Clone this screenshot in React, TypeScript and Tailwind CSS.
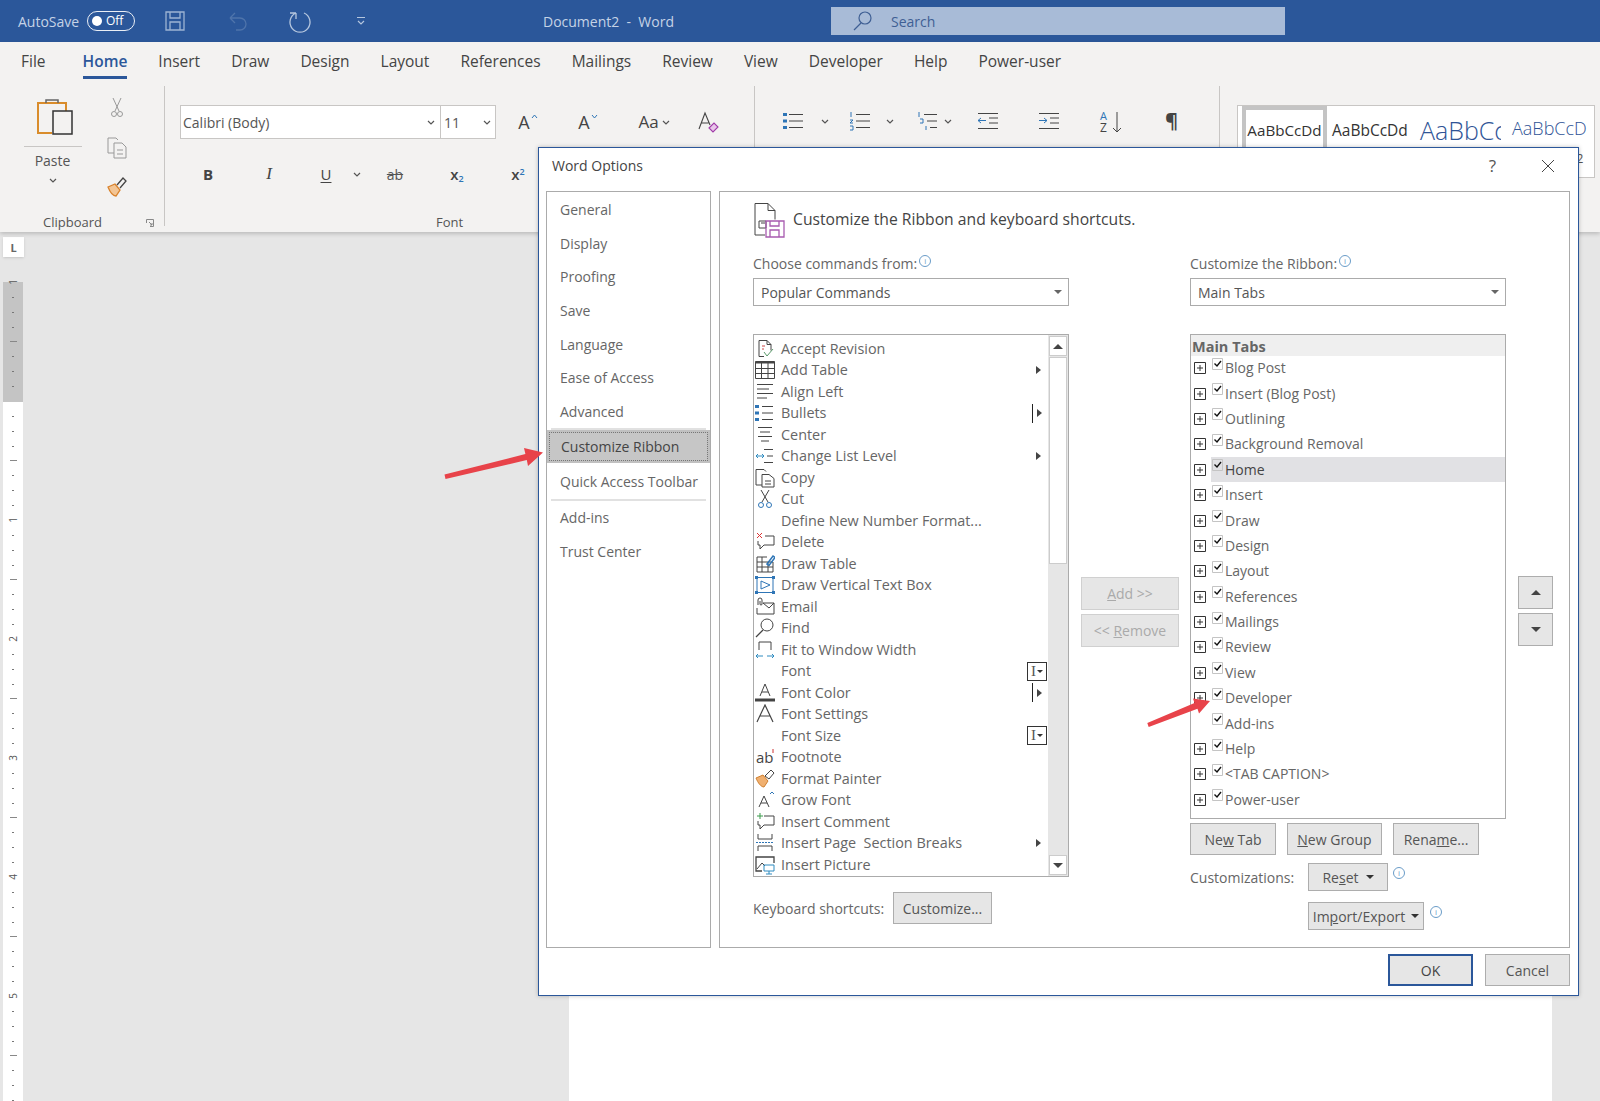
import type { ReactNode } from "react";

const FONT = "font-['Open_Sans','Noto_Sans',sans-serif]";

const TABS = ["File", "Home", "Insert", "Draw", "Design", "Layout", "References", "Mailings", "Review", "View", "Developer", "Help", "Power-user"];
const NAV_TOP = ["General", "Display", "Proofing", "Save", "Language", "Ease of Access", "Advanced"];
const TREE = ["Blog Post", "Insert (Blog Post)", "Outlining", "Background Removal", "Home", "Insert", "Draw", "Design", "Layout", "References", "Mailings", "Review", "View", "Developer", "Add-ins", "Help", "<TAB CAPTION>", "Power-user"];

function Svg({ w = 20, h = 20, children, className = "" }: { w?: number; h?: number; children: ReactNode; className?: string }) {
  return (
    <svg width={w} height={h} viewBox={`0 0 ${w} ${h}`} fill="none" stroke="#444" strokeWidth="1" className={`shrink-0 ${className}`}>
      {children}
    </svg>
  );
}

function Chevron({ color = "#555" }: { color?: string }) {
  return (
    <svg width="8" height="5" viewBox="0 0 8 5" fill="none" stroke={color} strokeWidth="1.2" className="shrink-0">
      <path d="M1 1l3 3 3-3" />
    </svg>
  );
}

const LIST_ICONS: Record<string, ReactNode> = {
  "Accept Revision": (
    <Svg>
      <path d="M4 1.5h8l4 4v6M4 1.5v16h5" />
      <path d="M12 1.5v4h4" />
      <path d="M9 13l3 4 6-7" stroke="#5a9a6a" />
      <path d="M7 7h3M7 10h2" stroke="#c44" />
    </Svg>
  ),
  "Add Table": (
    <Svg>
      <path d="M.5 1.5h19v17H.5z" />
      <path d="M.5 2.5h19" strokeWidth="2" />
      <path d="M.5 8.5h19M.5 13.5h19M6.5 3v15M13 3v15" />
    </Svg>
  ),
  "Align Left": (
    <Svg>
      <path d="M2 2.5h16M2 7h12M2 11.5h16M2 16h10" />
    </Svg>
  ),
  Bullets: (
    <Svg>
      <path d="M7 3.5h11M7 10h11M7 16.5h11" />
      <path d="M0 2h4v3H0zM0 8.5h4v3H0zM0 15h4v3H0z" fill="#2e75b6" stroke="none" />
    </Svg>
  ),
  Center: (
    <Svg>
      <path d="M3 2.5h14M5 7h10M3 11.5h14M6 16h8" />
    </Svg>
  ),
  "Change List Level": (
    <Svg>
      <path d="M9 3.5h9M12 10h6M9 16.5h9" />
      <path d="M1 10h8M3 8l-2 2 2 2M7 8l2 2-2 2" stroke="#2e8bc0" />
    </Svg>
  ),
  Copy: (
    <Svg>
      <path d="M7 17H1V1.5h8l2 2" />
      <path d="M7 6.5h7l5 4V19H7z" />
      <path d="M10 13h6M10 16h6" />
    </Svg>
  ),
  Cut: (
    <Svg>
      <path d="M6 1l7 12M14 1L7 13" />
      <circle cx="6" cy="16" r="2.5" stroke="#2e75b6" />
      <circle cx="14" cy="16" r="2.5" stroke="#2e75b6" />
    </Svg>
  ),
  Delete: (
    <Svg>
      <path d="M10 4h9v9H9l-4 4v-4H3V9" />
      <path d="M2 1l5 5M7 1L2 6" stroke="#d33" />
    </Svg>
  ),
  "Draw Table": (
    <Svg>
      <path d="M2 3h10M2 3v15h16V8M2 8h16M2 13h16M7 3v15M13 8v10" />
      <path d="M12 10l6-8 2 1.5-6 8z" stroke="#2e75b6" strokeWidth="1.5" />
    </Svg>
  ),
  "Draw Vertical Text Box": (
    <Svg>
      <path d="M2 2.5h16v15H2z" stroke="#2e75b6" />
      <path d="M6 6l9 4-9 4V6z" stroke="#2e75b6" />
      <path d="M0 1h3v3H0zM17 1h3v3h-3zM0 16h3v3H0zM17 16h3v3h-3z" fill="#2e75b6" stroke="none" />
    </Svg>
  ),
  Email: (
    <Svg>
      <path d="M8 6h11v11H2v-6" />
      <path d="M8 6l6 5 5-5" />
      <path d="M3 8V3a2 2 0 014 0v4a1 1 0 01-2 0V4" />
    </Svg>
  ),
  Find: (
    <Svg>
      <circle cx="12" cy="7" r="6" />
      <path d="M8 12l-7 7" strokeWidth="1.3" />
    </Svg>
  ),
  "Fit to Window Width": (
    <Svg>
      <path d="M4 10V2h12v8" />
      <path d="M1 16h7M3 14l-2 2 2 2M12 16h7M17 14l2 2-2 2" stroke="#2e8bc0" />
    </Svg>
  ),
  "Font Color": (
    <Svg>
      <path d="M5 13l5-12 5 12M7 9h6" />
      <path d="M0 15.5h20v3H0z" fill="#444" stroke="none" />
    </Svg>
  ),
  "Font Settings": (
    <Svg>
      <path d="M2 18L10 1l8 17M5 12h10" strokeWidth="1.2" />
    </Svg>
  ),
  Footnote: (
    <Svg>
      <text x="1" y="16" fontSize="15" fill="#444" stroke="none" fontFamily="Open Sans">ab</text>
      <path d="M18 2v4" stroke="#c33" />
    </Svg>
  ),
  "Format Painter": (
    <Svg>
      <path d="M1 9l7-3 5 6-4 6c-3 0-6-4-8-9z" fill="#f0b070" stroke="#d08030" />
      <path d="M10 7l6-6 3 3-5 6z" />
    </Svg>
  ),
  "Grow Font": (
    <Svg>
      <path d="M4 17l5-11 5 11M6 13h6" />
      <path d="M15 4l2-2 2 2" stroke="#2e75b6" />
    </Svg>
  ),
  "Insert Comment": (
    <Svg>
      <path d="M9 4h10v9H9l-4 4v-4H3V9" />
      <path d="M2 4h6M5 1v6" stroke="#3a9a4a" />
    </Svg>
  ),
  "Insert Page  Section Breaks": (
    <Svg>
      <path d="M3 1v5h14V1M3 18v-5h14v5" />
      <path d="M1 9.5h18" strokeDasharray="2 1" stroke="#2e75b6" />
    </Svg>
  ),
  "Insert Picture": (
    <Svg>
      <path d="M7 16H1V2h18v6" strokeWidth="1.3" />
      <path d="M2 14l5-6 3 3" />
      <path d="M9 10h10v6H9zM14 16v3M11 19h6" stroke="#2e8bc0" />
    </Svg>
  ),
};

const COMMANDS: { label: string; side?: "tri" | "bar" | "box" }[] = [
  { label: "Accept Revision" },
  { label: "Add Table", side: "tri" },
  { label: "Align Left" },
  { label: "Bullets", side: "bar" },
  { label: "Center" },
  { label: "Change List Level", side: "tri" },
  { label: "Copy" },
  { label: "Cut" },
  { label: "Define New Number Format..." },
  { label: "Delete" },
  { label: "Draw Table" },
  { label: "Draw Vertical Text Box" },
  { label: "Email" },
  { label: "Find" },
  { label: "Fit to Window Width" },
  { label: "Font", side: "box" },
  { label: "Font Color", side: "bar" },
  { label: "Font Settings" },
  { label: "Font Size", side: "box" },
  { label: "Footnote" },
  { label: "Format Painter" },
  { label: "Grow Font" },
  { label: "Insert Comment" },
  { label: "Insert Page  Section Breaks", side: "tri" },
  { label: "Insert Picture" },
];

function SideMark({ side }: { side?: "tri" | "bar" | "box" }) {
  if (side === "tri") return <div className="ml-auto mr-[6px] h-0 w-0 border-y-[4px] border-l-[5px] border-y-transparent border-l-[#444]" />;
  if (side === "bar")
    return (
      <div className="ml-auto mr-[5px] flex items-center gap-[4px]">
        <div className="h-[19px] w-px bg-[#222]" />
        <div className="h-0 w-0 border-y-[4px] border-l-[5px] border-y-transparent border-l-[#444]" />
      </div>
    );
  if (side === "box")
    return (
      <div className="ml-auto flex h-[19px] w-[20px] items-center justify-center gap-px border border-[#333] bg-white font-['Liberation_Serif',serif] text-[15px] leading-none text-[#555]">
        I<div className="h-0 w-0 border-x-[3px] border-t-[3px] border-x-transparent border-t-[#333]" />
      </div>
    );
  return null;
}

function Info() {
  return (
    <div className="flex h-[12px] w-[12px] shrink-0 items-center justify-center rounded-full border border-[#6a9cc8] text-[8px] leading-none text-[#6a9cc8]">i</div>
  );
}

const BTN_TONES = {
  normal: "border border-[#adadad] text-[#555]",
  disabled: "border border-[#d0d0d0] text-[#aaa]",
  primary: "border-2 border-[#2b579a] text-[#444]",
};

function Btn({ className = "", tone = "normal", children }: { className?: string; tone?: keyof typeof BTN_TONES; children: ReactNode }) {
  return (
    <div className={`flex items-center justify-center bg-[#e6e6e6] text-[14px] ${BTN_TONES[tone]} ${className}`}>
      {children}
    </div>
  );
}

function Select({ text }: { text: string }) {
  return (
    <div className="flex h-[28px] items-center border border-[#ababab] bg-white pl-[7px] pr-[6px] text-[14px] text-[#555]">
      {text}
      <div className="ml-auto h-0 w-0 border-x-[4px] border-t-[4px] border-x-transparent border-t-[#666]" />
    </div>
  );
}

function SpinArrow({ up }: { up?: boolean }) {
  return up ? (
    <div className="h-0 w-0 border-x-[5px] border-b-[5px] border-x-transparent border-b-[#444]" />
  ) : (
    <div className="h-0 w-0 border-x-[5px] border-t-[5px] border-x-transparent border-t-[#444]" />
  );
}

function SmallArrow() {
  return <div className="h-0 w-0 border-x-[4px] border-t-[4px] border-x-transparent border-t-[#333]" />;
}

function Ruler() {
  const ticks = Array.from({ length: 56 }, (_, i) => i);
  const numbers: Record<number, string> = { 0: "1", 16: "1", 24: "2", 32: "3", 40: "4", 48: "5" };
  return (
    <div className="relative ml-[3px] mt-[18px] w-[20px] shrink-0">
      <div className="absolute inset-x-0 bottom-0 top-[7px] bg-white" />
      <div className="absolute inset-x-0 top-[7px] h-[120px] bg-[#c4c4c4]" />
      <div className="relative flex flex-col">
        {ticks.map((i) => (
          <div key={i} className="flex h-[14.88px] items-center justify-center">
            {numbers[i] ? (
              <span className="-rotate-90 text-[10px] leading-none text-[#555]">{numbers[i]}</span>
            ) : i === 8 ? null : i % 4 === 0 ? (
              <div className="h-px w-[7px] bg-[#888]" />
            ) : (
              <div className="h-px w-[2px] bg-[#777]" />
            )}
          </div>
        ))}
      </div>
    </div>
  );
}

function TitleBar() {
  return (
    <div className="flex h-[42px] items-center bg-[#2b579a] pl-[18px] text-[#c5d3e6]">
      <span className="w-[69px] text-[14px]">AutoSave</span>
      <div className="flex h-[20px] w-[48px] items-center gap-[4px] rounded-full border-[1.5px] border-white/90 pl-[4px] text-[12px] leading-none text-white">
        <div className="h-[10px] w-[10px] rounded-full bg-white" />
        Off
      </div>
      <svg width="22" height="22" viewBox="0 0 22 22" fill="none" stroke="#9db4d3" strokeWidth="1.3" className="ml-[29px]">
        <path d="M2 2h18v18H2zM6 2v6h10V2M6 20v-8h10v8" />
      </svg>
      <svg width="22" height="22" viewBox="0 0 22 22" fill="none" stroke="#4f74ab" strokeWidth="1.3" className="ml-[41px]">
        <path d="M3 8h10a6 6 0 010 12H9M3 8l5-5M3 8l5 5" />
      </svg>
      <svg width="24" height="24" viewBox="0 0 24 24" fill="none" stroke="#b5c6de" strokeWidth="1.3" className="ml-[39px]">
        <path d="M8 4a10 10 0 108 0M8 4V10M8 4H2" />
      </svg>
      <svg width="10" height="10" viewBox="0 0 10 10" fill="none" stroke="#b5c6de" strokeWidth="1.2" className="ml-[44px]">
        <path d="M1 1.5h8M2 5l3 3 3-3" />
      </svg>
      <span className="ml-[177px] w-[288px] whitespace-pre text-[14px]">Document2  -  Word</span>
      <div className="flex h-[28px] w-[454px] items-center bg-[#a8bbd7] pl-[22px] text-[14px] text-[#3f5f94]">
        <svg width="20" height="20" viewBox="0 0 20 20" fill="none" stroke="#3f5f94" strokeWidth="1.2">
          <circle cx="12" cy="7" r="6" />
          <path d="M8 12l-7 7" />
        </svg>
        <span className="ml-[18px]">Search</span>
      </div>
    </div>
  );
}

function Tabs() {
  return (
    <div className="flex h-[44px] gap-[31px] pl-[21px] pt-[8px] text-[15.5px] text-[#444]">
      {TABS.map((t) =>
        t === "Home" ? (
          <div key={t} className="relative h-[26px] font-semibold text-[#2b579a]">
            {t}
            <div className="absolute inset-x-0 -bottom-[3px] h-[3px] bg-[#2b579a]" />
          </div>
        ) : (
          <div key={t} className={t === "File" ? "mr-[6px]" : ""}>{t}</div>
        ),
      )}
    </div>
  );
}

function ClipboardGroup() {
  return (
    <div className="flex w-[165px] flex-col border-r border-[#c8c6c4]">
      <div className="flex h-[127px] shrink-0">
        <div className="mr-[3px] flex w-[104px] flex-col items-center pl-[1px] pt-[10px]">
          <svg width="38" height="40" viewBox="0 0 38 40" fill="none" stroke="#d98c2b" strokeWidth="2" className="ml-[4px]">
            <path d="M16 37H2V7h28v8" />
            <path d="M10 7V4h12v3" stroke="#666" strokeWidth="1.5" />
            <path d="M17 15h19v23H17z" stroke="#333" strokeWidth="1.5" fill="#f3f2f1" />
          </svg>
          <div className="mt-[10px] h-px w-[58px] bg-[#c8c6c4]" />
          <span className="mt-[5px] text-[14px] leading-[18px] text-[#555]">Paste</span>
          <div className="mt-[8px]"><Chevron /></div>
        </div>
        <div className="flex flex-col items-center gap-[18px] pt-[11px]">
          <svg width="14" height="22" viewBox="0 0 14 22" fill="none" stroke="#999" strokeWidth="1">
            <path d="M3 1l6 13M11 1L5 14" />
            <circle cx="4" cy="17" r="2.5" />
            <circle cx="10" cy="17" r="2.5" />
          </svg>
          <svg width="20" height="22" viewBox="0 0 20 22" fill="none" stroke="#999" strokeWidth="1">
            <path d="M7 16H1V1h8l2 2" />
            <path d="M7 6h8l4 4v11H7zM10 13h6M10 17h6" />
          </svg>
          <svg width="20" height="20" viewBox="0 0 20 20" fill="none" stroke="#d9822b" strokeWidth="1.3">
            <path d="M1 10l7-3 5 6-4 6c-3 0-6-4-8-9z" fill="#f3c594" />
            <path d="M10 8l6-7 3 3-6 7" stroke="#444" />
          </svg>
        </div>
      </div>
      <div className="flex shrink-0 items-center pl-[43px] text-[13px] text-[#555]">
        Clipboard
        <svg width="8" height="8" viewBox="0 0 8 8" fill="none" stroke="#888" className="ml-[44px]">
          <path d="M.5 4V.5h7v7H4M3 3l3 3M6 4v2H4" />
        </svg>
      </div>
    </div>
  );
}

function FontGroup() {
  return (
    <div className="flex w-[590px] flex-col border-r border-[#c8c6c4] pl-[15px]">
      <div className="flex h-[58px] shrink-0 items-center pt-[14px] text-[#444]">
        <div className="flex h-[34px] w-[261px] items-center border border-[#c8c6c4] bg-white pl-[2px] pr-[5px] text-[14px] text-[#555]">
          Calibri (Body)
          <div className="ml-auto"><Chevron /></div>
        </div>
        <div className="-ml-px flex h-[34px] w-[56px] items-center border border-[#c8c6c4] bg-white pl-[3px] pr-[4px] text-[14px] text-[#555]">
          11
          <div className="ml-auto"><Chevron /></div>
        </div>
        <div className="flex w-[60px] justify-center gap-px pl-[4px] text-[18px]">
          A
          <svg width="7" height="5" viewBox="0 0 7 5" fill="none" stroke="#2e75b6" className="mt-[5px]"><path d="M1 4l2.5-3L6 4" /></svg>
        </div>
        <div className="flex w-[60px] justify-center gap-px pl-[4px] text-[18px]">
          A
          <svg width="7" height="5" viewBox="0 0 7 5" fill="none" stroke="#2e75b6" className="mt-[5px]"><path d="M1 1l2.5 3L6 1" /></svg>
        </div>
        <div className="flex w-[72px] items-center justify-center gap-[3px] pl-[4px] text-[17px]">Aa <Chevron /></div>
        <div className="flex w-[40px] justify-center">
          <svg width="22" height="22" viewBox="0 0 22 22" fill="none" stroke="#444" strokeWidth="1.1">
            <path d="M2 18L8 2l5 12M4.5 12h7" />
            <path d="M12 17l5-5 4 4-5 5z" fill="#e8c6ea" stroke="#a03aa8" />
          </svg>
        </div>
      </div>
      <div className="mt-[15px] flex h-[30px] shrink-0 items-center text-[#444]">
        <div className="w-[56px] text-center text-[15px] font-bold">B</div>
        <div className="w-[66px] text-center font-['Liberation_Serif',serif] text-[17px] italic">I</div>
        <div className="w-[48px] text-center text-[15px] underline underline-offset-2">U</div>
        <div className="flex w-[14px] justify-center"><Chevron /></div>
        <div className="w-[62px] text-center text-[14px] text-[#555] line-through">ab</div>
        <div className="w-[62px] text-center text-[15px] font-semibold">x<sub className="text-[9px] text-[#2e75b6]">2</sub></div>
        <div className="w-[60px] text-center text-[15px] font-semibold">x<sup className="text-[9px] text-[#2e75b6]">2</sup></div>
      </div>
      <div className="mt-[24px] shrink-0 pl-[256px] text-[13px] text-[#555]">Font</div>
    </div>
  );
}

function ParagraphGroup() {
  return (
    <div className="flex w-[465px] items-start border-r border-[#c8c6c4] pt-[24px]">
      <Svg w={22} h={22} className="ml-[27px]">
        <path d="M7 4.5h14M7 11h14M7 17.5h14" />
        <path d="M1 3h4v3H1zM1 9.5h4v3H1zM1 16h4v3H1z" fill="#2e75b6" stroke="none" />
      </Svg>
      <div className="ml-[17px] mt-[9px]"><Chevron /></div>
      <Svg w={22} h={22} className="ml-[20px]">
        <path d="M7 4.5h14M7 11h14M7 17.5h14" />
        <path d="M2 2v5M1 10h3l-3 3h3M1 16h3v4H1" stroke="#2e75b6" />
      </Svg>
      <div className="ml-[15px] mt-[9px]"><Chevron /></div>
      <Svg w={22} h={22} className="ml-[23px]">
        <path d="M7 4.5h13M10 11h10M13 17.5h7" />
        <path d="M2 2v5M3 9h3v4H3M9 16v4" stroke="#2e75b6" />
      </Svg>
      <div className="ml-[5px] mt-[9px]"><Chevron /></div>
      <Svg w={22} h={22} className="ml-[25px]">
        <path d="M1 3.5h20M12 8h9M12 13h9M1 18.5h20" />
        <path d="M1 10.5h8M4 8l-3 2.5L4 13" stroke="#2e75b6" />
      </Svg>
      <Svg w={22} h={22} className="ml-[39px]">
        <path d="M1 3.5h20M12 8h9M12 13h9M1 18.5h20" />
        <path d="M1 10.5h8M6 8l3 2.5L6 13" stroke="#2e75b6" />
      </Svg>
      <Svg w={24} h={24} className="ml-[39px]">
        <path d="M18 2v20M14 18l4 4 4-4" />
        <text x="1" y="10" fontSize="11" fill="#2e75b6" stroke="none" fontFamily="Open Sans">A</text>
        <text x="1" y="22" fontSize="12" fill="#444" stroke="none" fontFamily="Open Sans">Z</text>
      </Svg>
      <span className="ml-[42px] text-[20px] font-bold leading-[22px] text-[#444]">¶</span>
    </div>
  );
}

function StylesGroup() {
  return (
    <div className="ml-[17px] mt-[19px] flex h-[73px] w-[358px] items-start overflow-hidden border border-[#c8c6c4] bg-white text-[#333]">
      <div className="ml-[4px] flex h-[73px] w-[85px] shrink-0 justify-center border-4 border-b-0 border-[#c4c4c4] pt-[9px] text-[15.2px]">AaBbCcDd</div>
      <div className="w-[90px] shrink-0 pl-[5px] pt-[13px] text-[15.5px]">AaBbCcDd</div>
      <div className="h-[44px] w-[84px] shrink-0 overflow-hidden whitespace-nowrap pl-[3px] pt-[6px] text-[25px] font-light leading-[36px] text-[#2f5496]">AaBbCc</div>
      <div className="flex w-[91px] shrink-0 flex-col pl-[11px] pt-[9px] text-[#2f5496]">
        <span className="text-[18px] font-light leading-[26px]">AaBbCcD</span>
        <span className="mt-[10px] whitespace-nowrap pl-[15px] text-[12px] leading-[16px] text-[#555]">Heading 2</span>
      </div>
    </div>
  );
}

function CommandList() {
  return (
    <div className="relative flex h-[543px] border border-[#ababab] bg-white">
      <div className="flex flex-1 flex-col pr-[1px] pt-[3px] text-[14.4px] text-[#666]">
        {COMMANDS.map((c) => (
          <div key={c.label} className="flex h-[21.5px] items-center">
            <div className="flex w-[27px] shrink-0 pl-[1px]">{LIST_ICONS[c.label]}</div>
            <span className="whitespace-pre leading-none">{c.label}</span>
            <SideMark side={c.side} />
          </div>
        ))}
      </div>
      <div className="flex w-[20px] flex-col bg-[#e6e6e6]">
        <div className="m-px flex h-[20px] items-center justify-center border border-[#ccc] bg-white"><SpinArrow up /></div>
        <div className="mx-px h-[207px] border border-[#ccc] bg-white" />
        <div className="m-px mt-auto flex h-[20px] items-center justify-center border border-[#ccc] bg-white"><SpinArrow /></div>
      </div>
    </div>
  );
}

function TabTree() {
  return (
    <div className="h-[485px] border border-[#ababab] bg-white text-[14px] text-[#666]">
      <div className="flex h-[20.5px] items-center bg-[#efefef] pl-[1px] pt-[4px] text-[14.5px] font-bold leading-none">Main Tabs</div>
      {TREE.map((t) => (
        <div key={t} className="flex h-[25.4px] items-center">
          <div className="ml-[3px] flex w-[17px] shrink-0">
            {t !== "Add-ins" && (
              <svg width="12" height="12" viewBox="0 0 12 12" fill="none" stroke="#333">
                <path d="M.5.5h11v11H.5zM3 6h6M6 3v6" />
              </svg>
            )}
          </div>
          <div className={`flex h-full flex-1 items-center ${t === "Home" ? "bg-[#e1e1e4] text-[#444]" : ""}`}>
            <svg width="12" height="12" viewBox="0 0 12 12" fill="none" className="-mt-[9px] ml-px mr-[1px] shrink-0">
              <path d="M.5.5h10v11H.5z" stroke="#c4c4c4" />
              <path d="M2.5 5.5L5 8l4-5" stroke="#111" strokeWidth="1.4" />
            </svg>
            <span className="whitespace-nowrap leading-none">{t}</span>
          </div>
        </div>
      ))}
    </div>
  );
}

function CustomizePanel() {
  return (
    <div className="flex-1 border border-[#ababab] pl-[33px] text-[#666]">
      <div className="flex h-[62px] items-start pt-[10px]">
        <svg width="32" height="36" viewBox="0 0 32 36" fill="none" stroke="#444">
          <path d="M2 33V1.5h13l7 7v9M15 1.5v7h7M2 33h10" />
          <path d="M6 19h7v7H6zM8 21h4" />
          <path d="M13 19h18v16H13zM17 19v5h9v-5M17 35v-7h9v7" stroke="#a85bb0" strokeWidth="1.3" />
        </svg>
        <span className="ml-[8px] mt-[5px] text-[15.7px] leading-[24px] text-[#444]">Customize the Ribbon and keyboard shortcuts.</span>
      </div>
      <div className="flex">
        <div className="w-[316px]">
          <div className="flex h-[24px] items-start gap-[2px] text-[14px] leading-[20px]">Choose commands from:<div className="mt-[1px]"><Info /></div></div>
          <Select text="Popular Commands" />
          <div className="mt-[28px]"><CommandList /></div>
          <div className="mt-[15px] flex h-[32px] items-center text-[14px]">
            Keyboard shortcuts:
            <Btn className="ml-auto mr-[77px] h-[32px] w-[99px]">Customize...</Btn>
          </div>
        </div>
        <div className="ml-[12px] w-[98px] pt-[323px]">
          <Btn tone="disabled" className="h-[33px]"><span><u>A</u>dd &gt;&gt;</span></Btn>
          <Btn tone="disabled" className="mt-[4px] h-[33px]"><span>&lt;&lt; <u>R</u>emove</span></Btn>
        </div>
        <div className="ml-[11px] w-[316px]">
          <div className="flex h-[24px] items-start gap-[2px] text-[14px] leading-[20px]">Customize the Ribbon:<div className="mt-[1px]"><Info /></div></div>
          <Select text="Main Tabs" />
          <div className="mt-[28px]"><TabTree /></div>
          <div className="mt-[4px] flex h-[32px]">
            <Btn className="w-[86px]"><span>Ne<u>w</u> Tab</span></Btn>
            <Btn className="ml-[11px] w-[95px]"><span><u>N</u>ew Group</span></Btn>
            <Btn className="ml-[11px] w-[86px]"><span>Rena<u>m</u>e...</span></Btn>
          </div>
          <div className="mt-[8px] flex items-start text-[14px]">
            <span className="mt-[4px] w-[118px]">Customizations:</span>
            <Btn className="h-[28px] w-[80px] gap-[7px]"><span>Re<u>s</u>et</span> <SmallArrow /></Btn>
            <div className="ml-[5px] mt-[4px]"><Info /></div>
          </div>
          <div className="mt-[11px] flex items-start pl-[118px]">
            <Btn className="h-[28px] w-[116px] gap-[6px]"><span>Im<u>p</u>ort/Export</span> <SmallArrow /></Btn>
            <div className="ml-[6px] mt-[4px]"><Info /></div>
          </div>
        </div>
        <div className="ml-[12px] w-[35px] pt-[322px]">
          <Btn className="h-[33px]"><SpinArrow up /></Btn>
          <Btn className="mt-[4px] h-[33px]"><SpinArrow /></Btn>
        </div>
      </div>
    </div>
  );
}

function NavItem({ children }: { children: ReactNode }) {
  return <div className="flex h-[33.6px] items-center pl-[13px]">{children}</div>;
}

function WordOptions() {
  return (
    <div className="absolute left-[538px] top-[147px] flex h-[849px] w-[1041px] flex-col border border-[#2b579a] bg-white shadow-[0_0_4px_rgba(0,0,0,0.25)]">
      <div className="flex h-[43px] items-center pb-[8px] pl-[13px] text-[14px] text-[#444]">
        Word Options
        <span className="ml-auto mr-[45px] text-[17px] text-[#555]">?</span>
        <svg width="14" height="14" viewBox="0 0 14 14" fill="none" stroke="#444" className="mr-[23px]">
          <path d="M1 1l12 12M13 1L1 13" />
        </svg>
      </div>
      <div className="flex h-[757px] gap-[8px] pl-[7px] pr-[8px]">
        <div className="w-[165px] border border-[#ababab] pt-[1px] text-[14px] text-[#666]">
          {NAV_TOP.map((n) => <NavItem key={n}>{n}</NavItem>)}
          <div className="mx-[4px] h-[2px] bg-[#e1e1e1]" />
          <div className="mb-[2px] flex h-[33px] items-center border-[3px] border-[#c0c0c0] bg-[#c6c6c6] pl-[11px] text-[#444] outline-1 -outline-offset-[3px] outline-dotted outline-[#777]">Customize Ribbon</div>
          <NavItem>Quick Access Toolbar</NavItem>
          <div className="mx-[4px] h-[2px] bg-[#e1e1e1]" />
          <NavItem>Add-ins</NavItem>
          <NavItem>Trust Center</NavItem>
        </div>
        <CustomizePanel />
      </div>
      <div className="flex justify-end gap-[12px] pr-[8px] pt-[6px]">
        <Btn tone="primary" className="h-[32px] w-[85px]">OK</Btn>
        <Btn className="h-[32px] w-[85px]">Cancel</Btn>
      </div>
    </div>
  );
}

export default function App() {
  return (
    <div className={`relative h-[1101px] w-[1600px] overflow-hidden bg-[#e6e6e6] ${FONT}`}>
      <TitleBar />
      <div className="relative h-[190px] bg-[#f3f2f1] shadow-[0_2px_4px_rgba(0,0,0,0.18)]">
        <Tabs />
        <div className="flex h-[140px]">
          <ClipboardGroup />
          <FontGroup />
          <ParagraphGroup />
          <StylesGroup />
        </div>
      </div>
      <div className="flex h-[869px] overflow-hidden">
        <div className="flex shrink-0 flex-col">
          <div className="ml-[3px] mt-[5px] flex h-[20px] w-[21px] shrink-0 items-center justify-center bg-white text-[11px] font-bold leading-none text-[#666] shadow-sm">L</div>
          <Ruler />
        </div>
        <div className="ml-[545px] mt-[60px] w-[983px] bg-white" />
      </div>
      <WordOptions />
      <svg width="1600" height="1101" viewBox="0 0 1600 1101" className="pointer-events-none absolute inset-0">
        <polygon points="444.5,474.5 525.4,454 524,448 543,452.5 528,466 526.8,460 445.5,479" fill="#e8434a" />
        <polygon points="1147.3,723 1194.5,703 1193,698.6 1210,701 1199,713.4 1197.5,708.8 1148.7,727" fill="#e8434a" />
      </svg>
    </div>
  );
}
